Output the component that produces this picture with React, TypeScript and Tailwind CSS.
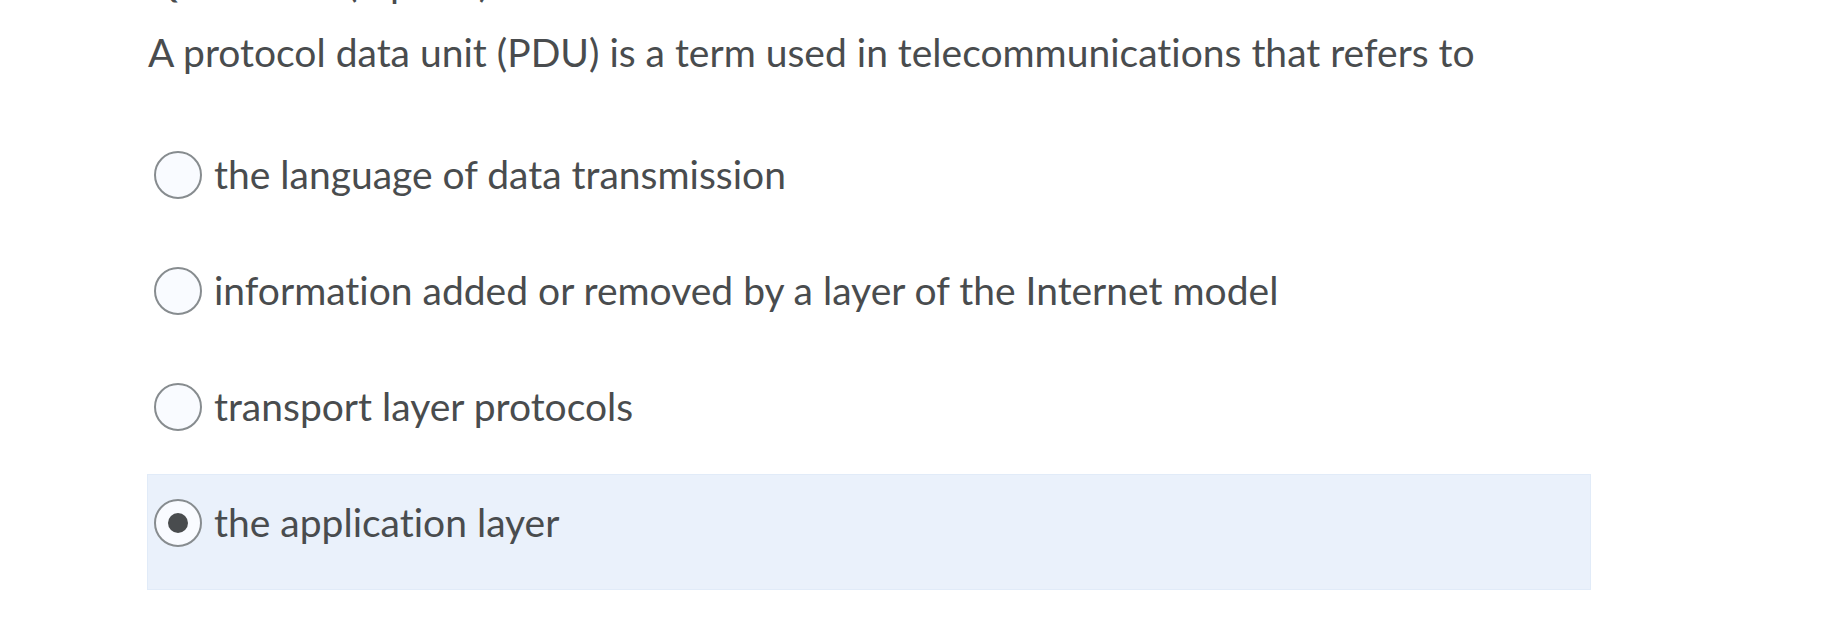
const options = [
  'the language of data transmission',
  'information added or removed by a layer of the Internet model',
  'transport layer protocols',
  'the application layer',
];

function Radio({ checked }: { checked: boolean }) {
  return (
    <span className="flex h-12 w-12 shrink-0 items-center justify-center rounded-full border-2 border-[#878c8f] bg-[#f9fbff]">
      {checked && <span className="h-5 w-5 rounded-full bg-[#494c4e]" />}
    </span>
  );
}

export default function App() {
  const selected = 3;

  return (
    <div
      className="flex h-screen w-full flex-col overflow-hidden bg-white pl-[147px] text-[#494c4e] [font-variant-ligatures:none]"
      style={{ fontFamily: 'Lato, "Noto Sans", sans-serif' }}
    >
      {/* heading scrolled mostly out of view */}
      <div className="-mt-[36px] h-[36px] text-[39px] leading-[36px]">Question 1 (1 point)</div>

      <p className="mt-[28px] pl-[1px] text-[39px] leading-[48px]">
        A protocol data unit (PDU) is a term used in telecommunications that refers to
      </p>

      <div className="mt-[50px] flex w-[1444px] flex-col">
        {options.map((label, i) => (
          <label
            key={label}
            className={
              i === selected
                ? 'flex h-[116px] items-start border border-[#e1ebf8] bg-[#eaf1fb] px-[6px] pt-[24px]'
                : 'flex h-[116px] items-start px-[7px] pt-[25px]'
            }
          >
            <Radio checked={i === selected} />
            <span className="ml-[12px] -translate-y-[1px] text-[39px] leading-[48px]">{label}</span>
          </label>
        ))}
      </div>
    </div>
  );
}
